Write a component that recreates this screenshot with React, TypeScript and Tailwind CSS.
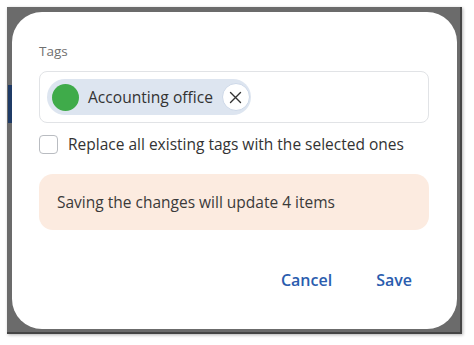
import React from "react";

export default function App() {
  return (
    <div
      className="w-[474px] h-[345px] bg-white p-[7px]"
      style={{ fontFamily: '"Open Sans", "Noto Sans", sans-serif' }}
    >
      <div className="relative w-[455px] h-[327px] bg-[#6b6b6b] border-r-2 border-b-2 border-[#454545] shadow-[1px_1px_3px_rgba(0,0,0,0.3)] p-[5px] pr-[3px] pb-[3px]">
        <div className="absolute left-[1px] top-[78px] w-[4px] h-[38px] bg-[#1f3b66]" />
        <div className="relative w-[445px] h-[317px] bg-white rounded-[30px] px-[27px] pt-[29px]">
          <div className="text-[13.5px] leading-[20px] text-[#707070]">Tags</div>
          <div className="mt-[10px] h-[52px] w-[390px] rounded-[8px] border border-[#e1e3e6] px-[7px] flex items-center">
            <div className="h-[36px] rounded-full bg-[#dde5f0] flex items-center pl-[5px] pr-[1px]">
              <div className="w-[27px] h-[27px] rounded-full bg-[#3fab4a]" />
              <span className="ml-[9px] text-[15.6px] text-[#333] leading-[22px]">Accounting office</span>
              <div className="ml-[9px] w-[28px] h-[28px] rounded-full bg-white border border-[#cdd8e8] flex items-center justify-center">
                <svg width="13" height="13" viewBox="0 0 13 13" fill="none" stroke="#333" strokeWidth="1.4" strokeLinecap="round">
                  <path d="M1.5 1.5L11.5 11.5M11.5 1.5L1.5 11.5" />
                </svg>
              </div>
            </div>
          </div>
          <div className="mt-[9px] flex items-center h-[24px]">
            <div className="w-[19px] h-[19px] rounded-[4px] border border-[#b9bcc1] bg-white" />
            <span className="ml-[10px] text-[15.5px] text-[#333] leading-[22px]">
              Replace all existing tags with the selected ones
            </span>
          </div>
          <div className="mt-[18px] h-[56px] w-[390px] rounded-[14px] bg-[#fcebe0] flex items-center px-[18px]">
            <span className="text-[15.5px] text-[#3a3a3a] leading-[22px]">
              Saving the changes will update 4 items
            </span>
          </div>
          <div className="mt-[38px] flex justify-end pr-[18px] gap-[44px] h-[24px] items-center">
            <button className="text-[16px] font-semibold text-[#2a5cae] leading-[22px]">Cancel</button>
            <button className="text-[16px] font-semibold text-[#2a5cae] leading-[22px]">Save</button>
          </div>
        </div>
      </div>
    </div>
  );
}
